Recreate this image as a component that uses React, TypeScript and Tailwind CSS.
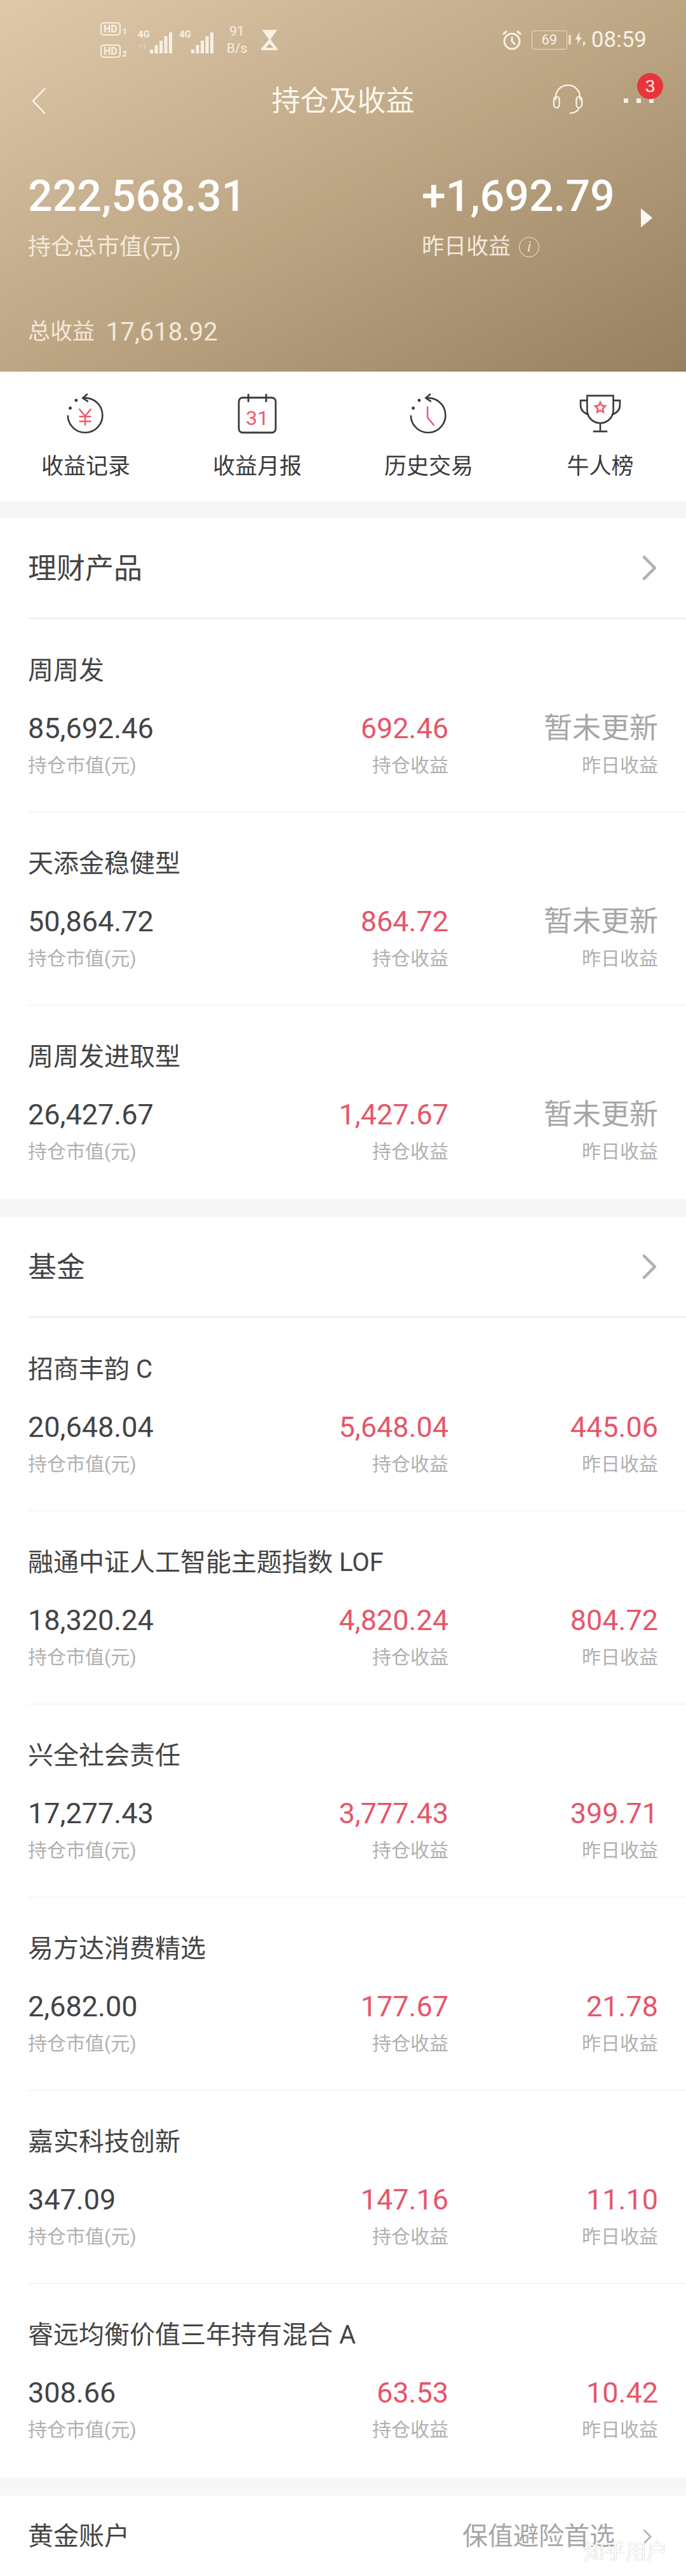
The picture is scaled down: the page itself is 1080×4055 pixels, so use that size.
import React from 'react';

interface Holding {
  name: string;
  value: string;
  profit: string;
  yesterday: string;
}

const products: Holding[] = [
  { name: '周周发', value: '85,692.46', profit: '692.46', yesterday: '暂未更新' },
  { name: '天添金稳健型', value: '50,864.72', profit: '864.72', yesterday: '暂未更新' },
  { name: '周周发进取型', value: '26,427.67', profit: '1,427.67', yesterday: '暂未更新' },
];

const funds: Holding[] = [
  { name: '招商丰韵 C', value: '20,648.04', profit: '5,648.04', yesterday: '445.06' },
  { name: '融通中证人工智能主题指数 LOF', value: '18,320.24', profit: '4,820.24', yesterday: '804.72' },
  { name: '兴全社会责任', value: '17,277.43', profit: '3,777.43', yesterday: '399.71' },
  { name: '易方达消费精选', value: '2,682.00', profit: '177.67', yesterday: '21.78' },
  { name: '嘉实科技创新', value: '347.09', profit: '147.16', yesterday: '11.10' },
  { name: '睿远均衡价值三年持有混合 A', value: '308.66', profit: '63.53', yesterday: '10.42' },
];

function Chevron({ className = '' }: { className?: string }) {
  return (
    <svg className={className} width="24" height="42" viewBox="0 0 24 42" fill="none">
      <path d="M4 4l17 17L4 38" stroke="#b0b0b0" strokeWidth="4.5" strokeLinecap="round" strokeLinejoin="round" />
    </svg>
  );
}

function Signal() {
  const bars = [6, 13, 20, 27, 33];
  return (
    <svg width="35" height="33" viewBox="0 0 35 33" fill="#f7f0e4">
      {bars.map((h, i) => (
        <rect key={i} x={i * 7.5} y={33 - h} width="5" height={h} />
      ))}
    </svg>
  );
}

function StatusBar() {
  return (
    <div className="flex h-[100px] items-center pl-[158px] pr-[62px] pt-[25px] text-[#f7f0e4]">
      <div className="flex w-[48px] flex-col gap-[14px]">
        {['1', '2'].map((n) => (
          <div key={n} className="flex items-end gap-[3px]">
            <span className="rounded-[5px] border-2 border-[#f7f0e4] px-[3px] text-[16px] font-bold leading-[17px]">HD</span>
            <span className="text-[12px] font-bold leading-none">{n}</span>
          </div>
        ))}
      </div>
      <div className="relative ml-[11px] flex h-[50px] w-[54px] items-start">
        <span className="mt-[9px] text-[15px] font-bold leading-none">4G</span>
        <span className="absolute bottom-[9px] left-[1px] text-[11px] font-bold leading-none opacity-40">11</span>
        <div className="absolute bottom-[4px] right-0">
          <Signal />
        </div>
      </div>
      <div className="relative ml-[11px] flex h-[50px] w-[54px] items-start">
        <span className="mt-[9px] text-[15px] font-bold leading-none">4G</span>
        <div className="absolute bottom-[4px] right-0">
          <Signal />
        </div>
      </div>
      <div className="ml-[16px] flex w-[42px] flex-col items-center text-[21px] leading-[27px]">
        <span>91</span>
        <span className="whitespace-nowrap">B/s</span>
      </div>
      <svg className="ml-[17px]" width="27" height="32" viewBox="0 0 28 34" fill="#f7f0e4">
        <path d="M1 0h26l-3 4-8 11v2l10 13h1v4H0v-4h1l11-13v-2L4 4z" />
        <path d="M14 23l-6 7h12z" fill="#c8b08e" />
      </svg>
      <div className="ml-auto flex items-center">
        <svg width="34" height="34" viewBox="0 0 34 34" fill="none" stroke="#f7f0e4" strokeWidth="3">
          <circle cx="17" cy="19" r="12" />
          <path d="M17 12v7l5 5M3 8l6-5M31 8l-6-5" />
        </svg>
        <div className="ml-[14px] flex h-[30px] w-[56px] items-center justify-center rounded-[3px] border border-[#e9dcc6] text-[22px] leading-none">69</div>
        <div className="ml-[2px] h-[15px] w-[4px] bg-[#e9dcc6]" />
        <svg className="ml-[5px]" width="19" height="28" viewBox="0 0 22 30" fill="#f7f0e4">
          <path d="M10 0L2 14h5l-2 9 9-13H9zM19 15l-4 7h2l-1 6 5-8h-3z" />
        </svg>
        <span className="ml-[8px] text-[35px] leading-none">08:59</span>
      </div>
    </div>
  );
}

function NavBar() {
  return (
    <div className="relative flex h-[116px] items-center justify-center text-white">
      <svg className="absolute left-[49px] top-[37px]" width="24" height="44" viewBox="0 0 24 44" fill="none">
        <path d="M22 2L3 22l19 20" stroke="#fbf6ee" strokeWidth="2.5" />
      </svg>
      <span className="pt-[2px] text-[45px] leading-none text-[#fbf6ee]">持仓及收益</span>
      <svg className="absolute left-[870px] top-[33px]" width="48" height="48" viewBox="0 0 50 50" fill="none" stroke="#f7f0e4" strokeWidth="2.5">
        <path d="M5 26V21a20 20 0 0 1 40 0v5" />
        <rect x="2" y="20" width="9" height="18" rx="4.5" />
        <rect x="39" y="20" width="9" height="18" rx="4.5" />
        <path d="M43 38c-1 6-8 9-15 9" />
      </svg>
      <div className="absolute left-[982px] top-[55px] flex gap-[13px]">
        <span className="size-[7px] bg-[#f7f0e4]" />
        <span className="size-[7px] bg-[#f7f0e4]" />
        <span className="size-[7px] bg-[#f7f0e4]" />
      </div>
      <div className="absolute left-[1003px] top-[15px] flex size-[41px] items-center justify-center rounded-full bg-[#e8353b] text-[28px] leading-none text-[#fbe9e0] font-[Liberation_Sans,sans-serif]">3</div>
    </div>
  );
}

function Hero() {
  return (
    <div className="relative h-[585px] bg-linear-to-br from-[#dfc9aa] via-[#bda684] to-[#97805f]">
      <StatusBar />
      <NavBar />
      <div className="relative mt-[53px] flex px-[44px]">
        <div className="w-[620px]">
          <div className="text-[68px] font-medium leading-[80px] text-white">222,568.31</div>
          <div className="mt-[18px] text-[36px] leading-[44px] text-[#f3e9da]">持仓总市值(元)</div>
        </div>
        <div>
          <div className="text-[68px] font-medium leading-[80px] text-white">+1,692.79</div>
          <div className="mt-[18px] flex items-center gap-[13px] text-[35px] leading-[44px] text-[#f3e9da]">
            昨日收益
            <span className="flex size-[32px] items-center justify-center rounded-full border border-[#f3e9da] text-[22px] italic leading-none">i</span>
          </div>
        </div>
        <svg className="absolute left-[1009px] top-[59px]" width="18" height="30" viewBox="0 0 18 30" fill="#fbf6ee">
          <path d="M0 0l18 15L0 30z" />
        </svg>
      </div>
      <div className="mt-[88px] flex items-center gap-[18px] pl-[44px] text-[#f3e9da]">
        <span className="text-[35px] leading-[48px]">总收益</span>
        <span className="text-[40px] leading-[48px]">17,618.92</span>
      </div>
    </div>
  );
}

function ToolIcon({ kind }: { kind: 'record' | 'month' | 'history' | 'rank' }) {
  const dark = '#3a3a3a';
  const red = '#ec5a6c';
  if (kind === 'record' || kind === 'history') {
    return (
      <svg width="64" height="70" viewBox="0 0 68 72" fill="none" stroke={dark} strokeWidth="2.8">
        <path d="M30 10A29 29 0 1 1 4 39" />
        <path d="M37 3l-8 7 9 6" />
        <circle cx="8" cy="27" r="1.2" fill={dark} />
        <circle cx="18" cy="14" r="1.2" fill={dark} />
        {kind === 'record' ? (
          <path d="M23 28l10 12 10-12M33 40v16M23 41h20M23 49h20" stroke={red} strokeWidth="2.6" />
        ) : (
          <path d="M32 24v19l11 13" stroke={red} strokeWidth="2.6" />
        )}
      </svg>
    );
  }
  if (kind === 'month') {
    return (
      <svg width="64" height="68" viewBox="0 0 64 68" fill="none" stroke={dark} strokeWidth="2.8">
        <rect x="3" y="9" width="58" height="55" rx="6" />
        <path d="M18 3v13M46 3v13" />
        <text x="32" y="52" textAnchor="middle" fill={red} stroke="none" fontSize="32" fontFamily="Roboto">31</text>
      </svg>
    );
  }
  return (
    <svg width="68" height="60" viewBox="0 0 72 64" fill="none" stroke={dark} strokeWidth="2.8">
      <path d="M14 2h44v24a22 22 0 0 1-44 0z" />
      <path d="M14 10H3v8c0 8 5 13 14 16M58 10h11v8c0 8-5 13-14 16" />
      <path d="M36 48v14M24 62h24" />
      <path d="M36 13l2.5 5.5 6 .8-4.4 4.2 1.1 6-5.2-2.9-5.2 2.9 1.1-6-4.4-4.2 6-.8z" stroke={red} strokeWidth="2.8" />
    </svg>
  );
}

function Tools() {
  const items = [
    { kind: 'record' as const, label: '收益记录' },
    { kind: 'month' as const, label: '收益月报' },
    { kind: 'history' as const, label: '历史交易' },
    { kind: 'rank' as const, label: '牛人榜' },
  ];
  return (
    <div className="grid h-[203px] grid-cols-4 bg-white pt-[30px]">
      {items.map((it) => (
        <div key={it.label} className="flex flex-col items-center">
          <div className="flex h-[72px] items-center">
            <ToolIcon kind={it.kind} />
          </div>
          <div className="mt-[25px] text-[35px] leading-[46px] text-[#3a3a3a]">{it.label}</div>
        </div>
      ))}
    </div>
  );
}

function Row({ item, last }: { item: Holding; last: boolean }) {
  const pending = item.yesterday === '暂未更新';
  return (
    <div className="ml-[44px] h-[304px] border-b border-[#eeeeee] pr-[44px] pt-[57px] data-[last=true]:border-b-0" data-last={last}>
      <div className="text-[40px] leading-[48px] text-[#444]">{item.name}</div>
      <div className="mt-[40px] grid grid-cols-[1fr_auto_330px] items-end">
        <div className="text-[45px] leading-[54px] text-[#444]">{item.value}</div>
        <div className="text-right text-[45px] leading-[54px] text-[#e5566a]">{item.profit}</div>
        <div className={`text-right text-[45px] leading-[54px] ${pending ? 'text-[#a6a6a6]' : 'text-[#e5566a]'}`}>{item.yesterday}</div>
      </div>
      <div className="mt-[9px] grid grid-cols-[1fr_auto_330px] text-[30px] leading-[44px] text-[#b0b0b0]">
        <div>持仓市值(元)</div>
        <div className="text-right">持仓收益</div>
        <div className="text-right">昨日收益</div>
      </div>
    </div>
  );
}

function Section({ title, items }: { title: string; items: Holding[] }) {
  return (
    <section className="bg-white">
      <div className="ml-[44px] flex h-[159px] items-center justify-between border-b-[3px] border-[#f1f1f1] pr-[46px]">
        <span className="pt-[2px] text-[45px] leading-none text-[#444]">{title}</span>
        <Chevron />
      </div>
      {items.map((item, i) => (
        <Row key={item.name} item={item} last={i === items.length - 1} />
      ))}
    </section>
  );
}

export default function App() {
  return (
    <div className="relative h-[4055px] w-[1080px] overflow-hidden bg-[#f7f7f7] font-[Roboto,'Noto_Sans_CJK_SC',sans-serif]">
      <Hero />
      <Tools />
      <div className="mt-[28px]">
        <Section title="理财产品" items={products} />
      </div>
      <div className="mt-[29px]">
        <Section title="基金" items={funds} />
      </div>
      <div className="mt-[30px] flex h-[127px] items-center justify-between bg-white pl-[44px] pr-[54px]">
        <span className="text-[40px] leading-none text-[#444]">黄金账户</span>
        <div className="flex items-center gap-[44px]">
          <span className="text-[40px] leading-none text-[#a6a6a6]">保值避险首选</span>
          <Chevron className="h-[36px] w-[14px]" />
        </div>
      </div>
      <div className="absolute left-[919px] top-[3993px] text-[33px] leading-[48px] text-white [text-shadow:0_0_1px_#888]">知乎用户</div>
    </div>
  );
}
